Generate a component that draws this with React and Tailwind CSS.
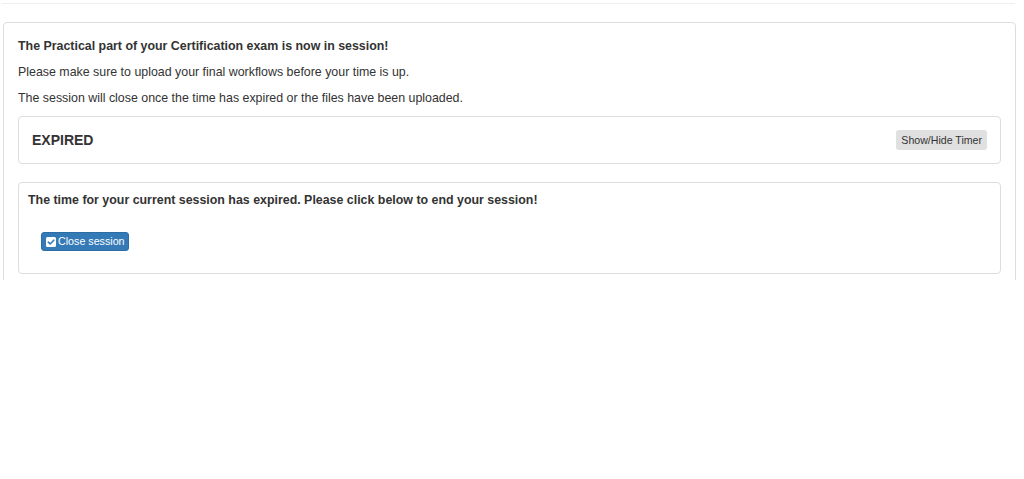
import React from 'react';

function CheckSquare() {
  return (
    <svg className="w-[10px] h-[10px] shrink-0" viewBox="0 0 10 10">
      <rect x="0" y="0" width="10" height="10" rx="1.5" fill="#ffffff" />
      <path d="M2.3 5.2 L4.2 7 L7.8 3.2" stroke="#337ab7" strokeWidth="1.6" fill="none" strokeLinecap="round" strokeLinejoin="round" />
    </svg>
  );
}

export default function App() {
  return (
    <div className="w-[1024px] h-[479px] bg-white overflow-hidden text-[#333] text-[12.4px]" style={{ fontFamily: '"Liberation Sans", Arial, sans-serif' }}>
      {/* top rule */}
      <div className="pt-[3px] pl-[2px] w-[1015px]">
        <div className="h-[1px] bg-[#eeeeee]" />
      </div>

      {/* outer panel, cut off at the bottom */}
      <div className="ml-[3px] mt-[18px] w-[1013px] h-[258px] overflow-hidden">
        <div className="border border-[#dddddd] rounded-[4px] px-[14px] pt-[15px] pb-[20px]">
          <p className="font-bold leading-[17px] mb-[9px]">The Practical part of your Certification exam is now in session!</p>
          <p className="leading-[17px] mb-[9px]">Please make sure to upload your final workflows before your time is up.</p>
          <p className="leading-[17px] mb-[9px]">The session will close once the time has expired or the files have been uploaded.</p>

          {/* timer panel */}
          <div className="border border-[#dddddd] rounded-[4px] h-[48px] flex items-center justify-between pl-[13px] pr-[13px]">
            <span className="font-bold text-[14px]">EXPIRED</span>
            <button className="bg-[#e0e0e0] rounded-[3px] h-[20px] px-[5px] text-[10.6px] text-[#333] leading-[20px]">Show/Hide Timer</button>
          </div>

          {/* expired panel */}
          <div className="mt-[18px] border border-[#dddddd] rounded-[4px] pl-[9px] pr-[9px] pt-[9px] pb-[22px]">
            <p className="font-bold leading-[17px]">The time for your current session has expired. Please click below to end your session!</p>
            <div className="mt-[23px] pl-[13px] flex">
              <button className="inline-flex items-center gap-[2px] bg-[#337ab7] border border-[#2e6da4] rounded-[3px] h-[19px] pl-[4px] pr-[3px] text-[10.7px] text-white">
                <CheckSquare />
                <span>Close session</span>
              </button>
            </div>
          </div>
        </div>
      </div>
    </div>
  );
}
